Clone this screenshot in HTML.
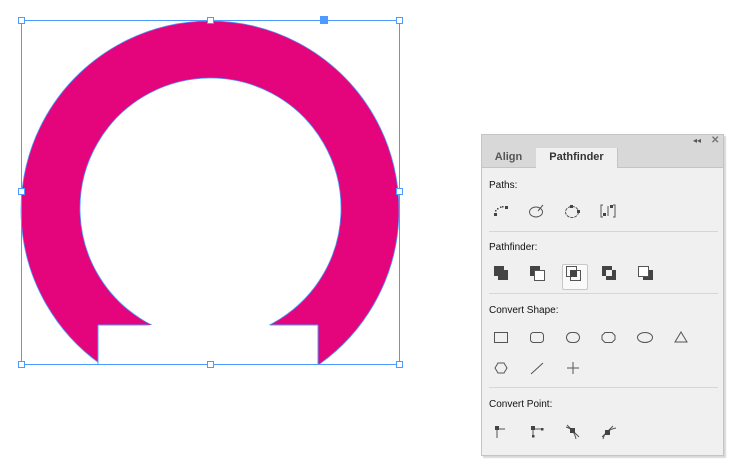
<!DOCTYPE html>
<html><head><style>
body{margin:0;width:733px;height:464px;background:#fff;position:relative;overflow:hidden;font-family:"Liberation Sans",sans-serif}
.p{position:absolute;left:481px;top:134px;width:241px;height:320px;background:#f0f0f0;border:1px solid #c4c4c4;box-shadow:2px 2px 1px #d8d8d8}
.lbl{position:absolute;left:7px;font-size:10px;color:#111}
.sep{position:absolute;left:7px;width:229px;height:1px;background:#d6d6d6}
</style></head><body>
<svg width="733" height="464" style="position:absolute;left:0;top:0">
<defs><clipPath id="c"><path d="M0 0H733V325H98V364H0Z M318 325H733V364H318Z"/></clipPath></defs>
<path clip-path="url(#c)" fill="#e4047c" stroke="#4d9bff" stroke-width="0.8" fill-rule="evenodd" d="M210 21a189 189 0 1 0 0.01 0Z M210.5 78a130.5 130.5 0 1 0 0.01 0Z"/>
<path d="M98 325H148M98 325V364M318 325H270M318 325V364" stroke="#4d9bff" stroke-width="1"/>
<rect x="21.5" y="20.5" width="378" height="344" fill="none" stroke="#4d9bff" stroke-width="1"/>
<g fill="#fff" stroke="#4d9bff" stroke-width="1">
<rect x="18.5" y="17.5" width="6" height="6"/><rect x="207.5" y="17.5" width="6" height="6"/><rect x="396.5" y="17.5" width="6" height="6"/>
<rect x="18.5" y="188.5" width="6" height="6"/><rect x="396.5" y="188.5" width="6" height="6"/>
<rect x="18.5" y="361.5" width="6" height="6"/><rect x="207.5" y="361.5" width="6" height="6"/><rect x="396.5" y="361.5" width="6" height="6"/>
</g>
<rect x="320" y="16" width="8" height="8" fill="#4d9bff"/>
</svg>
<div class="p">
<div style="position:absolute;left:0;top:0;width:241px;height:13px;background:#d8d8d8"></div>
<div style="position:absolute;left:211px;top:1px;font-size:8px;color:#555">◂◂</div>
<div style="position:absolute;left:229px;top:0px;font-size:10px;color:#777;font-weight:bold">✕</div>
<div style="position:absolute;left:0;top:13px;width:241px;height:19px;background:#d8d8d8;border-bottom:1px solid #c4c4c4"></div>
<div style="position:absolute;left:0;top:13px;width:53px;height:19px;font-size:11px;font-weight:bold;color:#555;text-align:center;line-height:19px">Align</div>
<div style="position:absolute;left:54px;top:13px;width:81px;height:20px;background:#f0f0f0;font-size:11px;font-weight:bold;color:#333;text-align:center;line-height:19px;border-right:1px solid #c4c4c4">Pathfinder</div>
<div class="lbl" style="top:45px">Paths:</div>
<div class="sep" style="top:96px"></div>
<div class="lbl" style="top:107px">Pathfinder:</div>
<div class="sep" style="top:158px"></div>
<div class="lbl" style="top:170px">Convert Shape:</div>
<div class="sep" style="top:252px"></div>
<div class="lbl" style="top:264px">Convert Point:</div>
<div style="position:absolute;left:80px;top:129px;width:24px;height:24px;border:1px solid #c8c8c8;border-radius:2px;background:#fafafa"></div>
</div>
<svg width="733" height="464" style="position:absolute;left:0;top:0" fill="none" stroke="#555" stroke-width="1">
<g fill="#444" stroke="none"><rect x="494" y="213" width="3" height="3"/><rect x="505" y="206" width="3" height="3"/><rect x="495" y="210" width="1.5" height="1.5"/><rect x="497" y="208" width="1.5" height="1.5"/><rect x="500" y="206.5" width="1.5" height="1.5"/><rect x="502" y="206" width="1.5" height="1.5"/></g>
<ellipse cx="536" cy="212" rx="6.5" ry="5"/><path d="M538 211l5-6"/>
<ellipse cx="572" cy="212" rx="6.5" ry="5.5" stroke-dasharray="3 1"/><rect x="570" y="205" width="3" height="3" fill="#444" stroke="none"/><rect x="577" y="210" width="3" height="3" fill="#444" stroke="none"/>
<path d="M603 205h-2v12h2M613 205h2v12h-2M608 206v10"/><rect x="603" y="213" width="3" height="3" fill="#444" stroke="none"/><rect x="610" y="205" width="3" height="3" fill="#444" stroke="none"/>
<g fill="#444" stroke="none"><rect x="494" y="266" width="10" height="10"/><rect x="498" y="270" width="10" height="10"/>
<rect x="530" y="266" width="10" height="10"/><rect x="643" y="270" width="10" height="10"/><rect x="602" y="266" width="10" height="10"/><rect x="606" y="270" width="10" height="10"/></g>
<rect x="534.5" y="270.5" width="10" height="10" fill="#fff"/>
<rect x="566.5" y="266.5" width="10" height="10"/><rect x="570.5" y="270.5" width="10" height="10"/><rect x="570" y="270" width="7" height="7" fill="#444" stroke="none"/>
<rect x="606" y="270" width="6" height="6" fill="#f0f0f0" stroke="none"/>
<rect x="638.5" y="266.5" width="10" height="10" fill="#fff"/>
<rect x="494.5" y="332.5" width="13" height="10"/>
<rect x="530.5" y="332.5" width="13" height="10" rx="3"/>
<rect x="566.5" y="332.5" width="13" height="10" rx="5"/>
<path d="M605 332.5h7l3 3v4l-3 3h-7l-3-3v-4z"/>
<ellipse cx="645" cy="337.5" rx="7.5" ry="5"/>
<path d="M681 332l6 10h-12z"/>
<path d="M498 363h6l3 5-3 5h-6l-3-5z"/>
<path d="M531 374l12-11"/>
<path d="M573 362v12M567 368h12"/>
<path d="M497 428v10M497 429h8M533 428v9M533 429h8"/>
<rect x="495" y="426" width="4" height="4" fill="#444" stroke="none"/><rect x="531" y="426" width="4" height="4" fill="#444" stroke="none"/>
<rect x="532" y="435" width="2.5" height="2.5" fill="#444" stroke="none"/><rect x="541" y="428" width="2.5" height="2.5" fill="#444" stroke="none"/>
<path d="M566 427q8 2 10 12M567 425l12 12"/><rect x="570" y="428" width="5" height="5" fill="#444" stroke="none"/>
<path d="M603 439q2-9 13-11M602 437l11-11"/><rect x="605" y="430" width="5" height="5" fill="#444" stroke="none"/>
</svg>
</body></html>
